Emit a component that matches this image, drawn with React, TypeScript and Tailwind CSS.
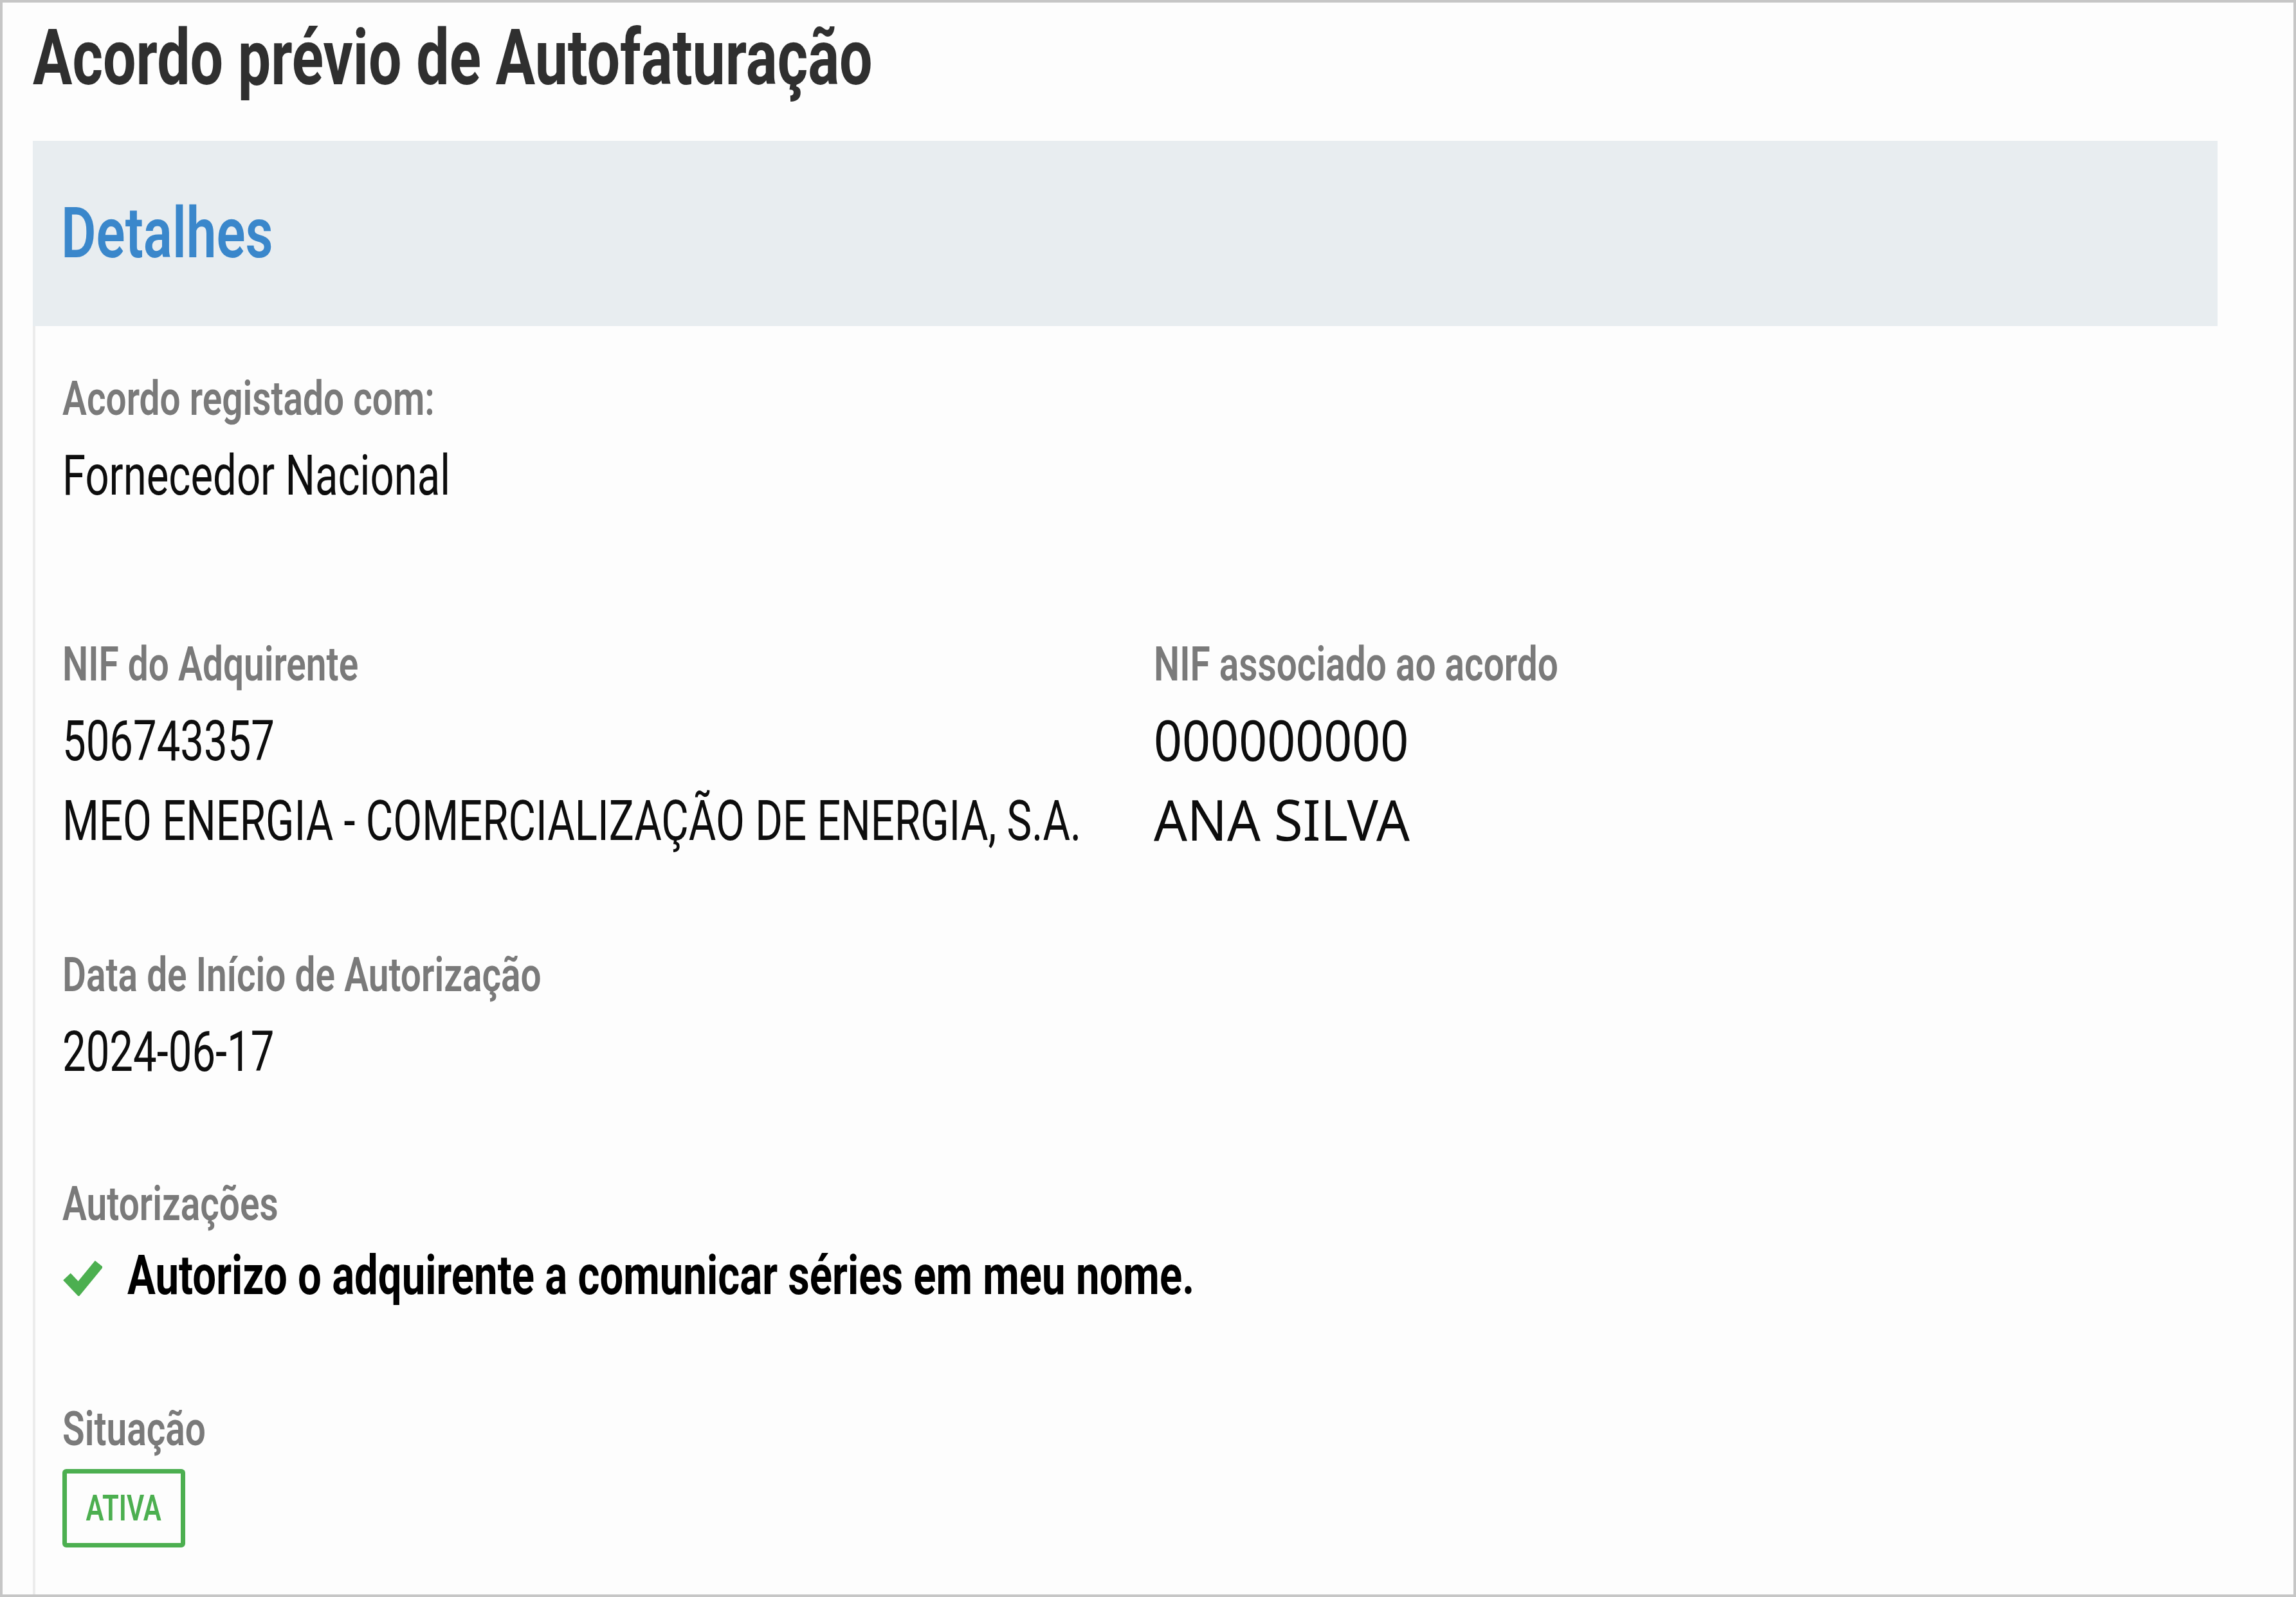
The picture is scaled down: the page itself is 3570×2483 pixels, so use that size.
import type { ReactNode } from 'react';

/** The screenshot is squeezed horizontally, so every text run is narrowed from its left edge. */
function Sq({ children, className = 'scale-x-[0.75]' }: { children: ReactNode; className?: string }) {
  return <span className={`inline-block origin-left whitespace-nowrap ${className}`}>{children}</span>;
}

function Label({ children }: { children: ReactNode }) {
  return (
    <div className="h-[75px] text-[75px] leading-none font-semibold text-[#7a7a7a]">
      <Sq className="scale-x-[0.757]">{children}</Sq>
    </div>
  );
}

function Value({ children, className = '' }: { children: ReactNode; className?: string }) {
  return (
    <div className={`h-[87px] text-[87px] leading-none text-[#0d0d0d] ${className}`}>
      <Sq>{children}</Sq>
    </div>
  );
}

function CheckMark() {
  return (
    <svg width="62" height="62" viewBox="0 0 62 62" className="shrink-0">
      <polyline
        points="7,32 25,51 57,12"
        fill="none"
        stroke="#4caf50"
        strokeWidth="16"
        strokeLinecap="butt"
        strokeLinejoin="miter"
      />
    </svg>
  );
}

export default function App() {
  return (
    <div className="flex h-[2483px] w-[3570px] flex-col overflow-hidden border-4 border-[#c6c6c6] bg-[#fdfdfd] font-['Roboto',sans-serif]">
      {/* Page title */}
      <div className="pl-[47px] pt-[26px]">
        <h1 className="h-[121px] text-[121px] leading-none font-bold text-[#2f2f2f]">
          <Sq className="scale-x-[0.755]">Acordo prévio de Autofaturação</Sq>
        </h1>
      </div>

      {/* Details card */}
      <div className="ml-[47px] mt-[68px] flex w-[3397px] flex-1 flex-col">
        <div className="flex h-[288px] items-center bg-[#e8edf0] pl-[44px]">
          <h2 className="h-[110px] text-[110px] leading-none font-semibold text-[#3a87cb]">
            <Sq className="scale-x-[0.762]">Detalhes</Sq>
          </h2>
        </div>

        <div className="flex-1 border-l-4 border-[#ececec] pl-[42px] pt-[75px]">
          <Label>Acordo registado com:</Label>
          <Value className="mt-[39px]">Fornecedor Nacional</Value>

          <div className="mt-[212px] grid grid-cols-[1697px_1fr]">
            <div>
              <Label>NIF do Adquirente</Label>
              <Value className="mt-[39px]">506743357</Value>
              <Value className="mt-[37px]">MEO ENERGIA - COMERCIALIZAÇÃO DE ENERGIA, S.A.</Value>
            </div>
            <div>
              <Label>NIF associado ao acordo</Label>
              <div className="mt-[35px] h-[88px] font-['Noto_Sans',sans-serif] text-[88px] leading-none text-[#0d0d0d]">
                <Sq className="scale-x-[0.875]">000000000</Sq>
              </div>
              <div className="mt-[36px] h-[88px] font-['Noto_Sans',sans-serif] text-[88px] leading-none text-[#0d0d0d]">
                <Sq className="scale-x-[0.925]">ANA SILVA</Sq>
              </div>
            </div>
          </div>

          <div className="mt-[158px]">
            <Label>Data de Início de Autorização</Label>
            <Value className="mt-[39px]">2024-06-17</Value>
          </div>

          <div className="mt-[155px]">
            <Label>Autorizações</Label>
            <div className="mt-[32px] flex items-center gap-[39px]">
              <CheckMark />
              <div className="h-[85px] text-[85px] leading-none font-bold text-black">
                <Sq className="scale-x-[0.768]">Autorizo o adquirente a comunicar séries em meu nome.</Sq>
              </div>
            </div>
          </div>

          <div className="mt-[158px]">
            <Label>Situação</Label>
            <div className="mt-[25px] flex h-[122px] w-[191px] items-center justify-center rounded-[6px] border-[7px] border-[#4caf50]">
              <span className="inline-block h-[56px] origin-center scale-x-[0.75] whitespace-nowrap text-[56px] leading-none font-semibold text-[#4caf50]">
                ATIVA
              </span>
            </div>
          </div>
        </div>
      </div>
    </div>
  );
}
